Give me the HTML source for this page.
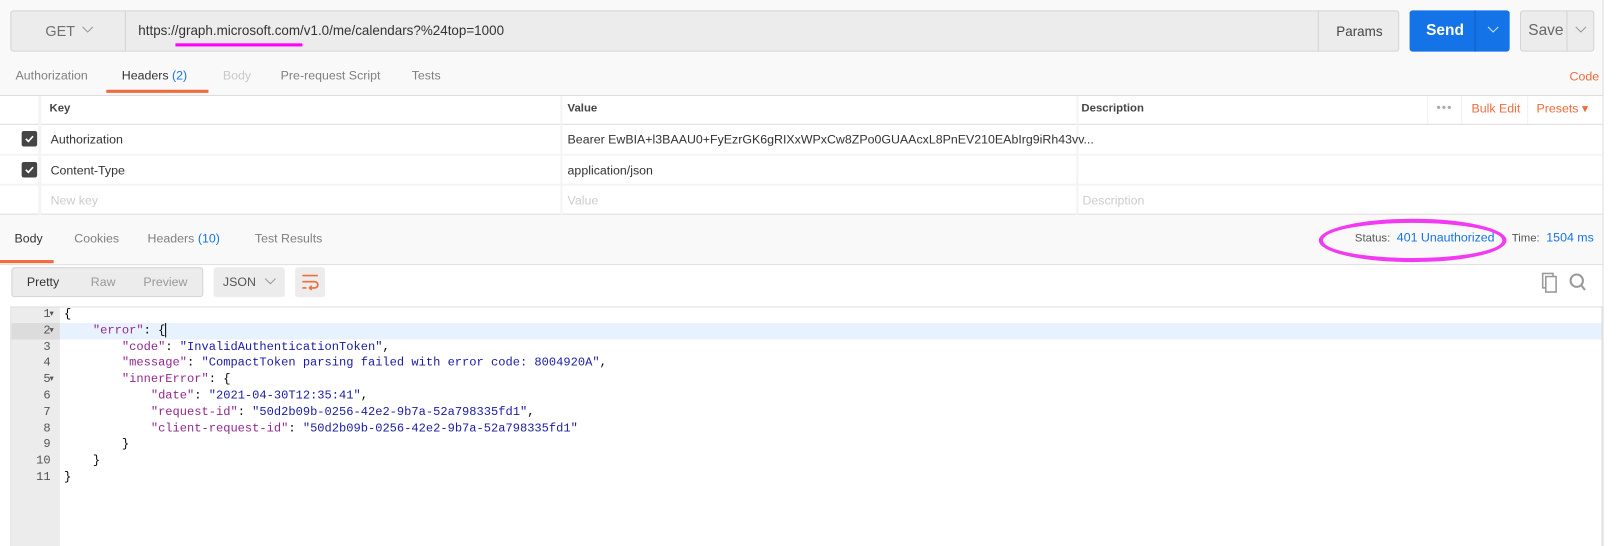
<!DOCTYPE html><html><head><style>
*{box-sizing:border-box;margin:0;padding:0}
html,body{width:1618px;height:546px;overflow:hidden;background:#f9f9f9}
#w{width:1568px;height:530px;transform:scale(1.0319);transform-origin:0 0;position:relative;font-family:"Liberation Sans",sans-serif;font-size:12px;color:#505050;background:#f9f9f9}
.a{position:absolute}
.mono{font-family:"Liberation Mono",monospace;font-size:11.7px}
.k{color:#92278f}.s{color:#1a1aa6}
</style></head><body><div id="w">
<div class="a" style="left:1553px;top:0;width:15px;height:530px;background:#fff;border-left:1px solid #ddd"></div>
<div class="a" style="left:10px;top:10px;width:1346px;height:40px;background:#ececec;border:1px solid #d4d4d4;border-radius:3px"></div>
<div class="a" style="left:121px;top:10px;width:1px;height:40px;background:#d4d4d4"></div>
<div class="a" style="left:44px;top:22px;font-size:14px;color:#707070">GET</div>
<svg class="a" style="left:78px;top:24px" width="14" height="10"><path d="M2 2l5 5 5-5" stroke="#999" fill="none"/></svg>
<div class="a" style="left:134px;top:22px;font-size:13px;color:#333">https://graph.microsoft.com/v1.0/me/calendars?%24top=1000</div>
<div class="a" style="left:170px;top:42px;width:123px;height:3px;background:#f0f"></div>
<div class="a" style="left:1277px;top:10px;width:1px;height:40px;background:#d4d4d4"></div>
<div class="a" style="left:1295px;top:23px;font-size:13px;color:#444">Params</div>
<div class="a" style="left:1366px;top:10px;width:97px;height:40px;background:#1473e6;border-radius:3px"></div>
<div class="a" style="left:1429px;top:10px;width:1px;height:40px;background:#0d5fc2"></div>
<div class="a" style="left:1382px;top:21px;font-size:15px;font-weight:bold;color:#fff">Send</div>
<svg class="a" style="left:1440px;top:24px" width="14" height="10"><path d="M2 2l5 5 5-5" stroke="#cfe0ff" fill="none"/></svg>
<div class="a" style="left:1473px;top:10px;width:72px;height:40px;background:#ececec;border:1px solid #d4d4d4;border-radius:3px"></div>
<div class="a" style="left:1518px;top:10px;width:1px;height:40px;background:#d4d4d4"></div>
<div class="a" style="left:1481px;top:21px;font-size:15px;color:#666">Save</div>
<svg class="a" style="left:1525px;top:24px" width="14" height="10"><path d="M2 2l5 5 5-5" stroke="#999" fill="none"/></svg>
<div class="a" style="left:15px;top:66px;color:#808080">Authorization</div>
<div class="a" style="left:118px;top:66px;color:#333">Headers <span style="color:#1473e6">(2)</span></div>
<div class="a" style="left:103px;top:87px;width:99px;height:3px;background:#f26b3a"></div>
<div class="a" style="left:216px;top:66px;color:#c8c8c8">Body</div>
<div class="a" style="left:272px;top:66px;color:#808080">Pre-request Script</div>
<div class="a" style="left:399px;top:66px;color:#808080">Tests</div>
<div class="a" style="left:1521px;top:67px;color:#f26b3a">Code</div>
<div class="a" style="left:0;top:92px;width:1553px;height:116px;background:#fff;border-top:1px solid #ddd;border-bottom:1px solid #ddd"></div>
<div class="a" style="left:0;top:120px;width:1553px;height:1px;background:#ddd"></div>
<div class="a" style="left:0;top:149px;width:1553px;height:2px;background:#f4f4f4"></div>
<div class="a" style="left:0;top:178px;width:1553px;height:2px;background:#f4f4f4"></div>
<div class="a" style="left:37px;top:93px;width:3px;height:115px;background:#f4f4f4"></div>
<div class="a" style="left:543px;top:93px;width:2px;height:115px;background:#f4f4f4"></div>
<div class="a" style="left:1043px;top:93px;width:2px;height:115px;background:#f4f4f4"></div>
<div class="a" style="left:1383px;top:93px;width:1px;height:27px;background:#f0f0f0"></div>
<div class="a" style="left:1416px;top:93px;width:1px;height:27px;background:#f0f0f0"></div>
<div class="a" style="left:1480px;top:93px;width:1px;height:27px;background:#f0f0f0"></div>
<div class="a" style="left:48px;top:99px;font-size:11px;font-weight:bold;color:#444">Key</div>
<div class="a" style="left:550px;top:99px;font-size:11px;font-weight:bold;color:#444">Value</div>
<div class="a" style="left:1048px;top:99px;font-size:11px;font-weight:bold;color:#444">Description</div>
<div class="a" style="left:1392px;top:97px;color:#aaa;letter-spacing:1px">•••</div>
<div class="a" style="left:1426px;top:98px;color:#f26b3a">Bulk Edit</div>
<div class="a" style="left:1489px;top:98px;color:#f26b3a">Presets ▾</div>
<div class="a" style="left:21px;top:127px;width:15px;height:15px;background:#444;border-radius:2px"></div>
<svg class="a" style="left:21px;top:127px" width="15" height="15"><path d="M4 7.5l2.5 2.5 4.5-5" stroke="#fff" stroke-width="1.6" fill="none"/></svg>
<div class="a" style="left:21px;top:157px;width:15px;height:15px;background:#444;border-radius:2px"></div>
<svg class="a" style="left:21px;top:157px" width="15" height="15"><path d="M4 7.5l2.5 2.5 4.5-5" stroke="#fff" stroke-width="1.6" fill="none"/></svg>
<div class="a" style="left:49px;top:128px;color:#333">Authorization</div>
<div class="a" style="left:550px;top:128px;color:#333">Bearer EwBIA+l3BAAU0+FyEzrGK6gRIXxWPxCw8ZPo0GUAAcxL8PnEV210EAbIrg9iRh43vv...</div>
<div class="a" style="left:49px;top:158px;color:#333">Content-Type</div>
<div class="a" style="left:550px;top:158px;color:#333">application/json</div>
<div class="a" style="left:49px;top:187px;color:#ccc">New key</div>
<div class="a" style="left:550px;top:187px;color:#ccc">Value</div>
<div class="a" style="left:1049px;top:187px;color:#ccc">Description</div>
<div class="a" style="left:14px;top:224px;color:#333">Body</div>
<div class="a" style="left:0;top:252px;width:52px;height:3px;background:#f26b3a"></div>
<div class="a" style="left:72px;top:224px;color:#808080">Cookies</div>
<div class="a" style="left:143px;top:224px;color:#808080">Headers <span style="color:#1473e6">(10)</span></div>
<div class="a" style="left:247px;top:224px;color:#808080">Test Results</div>
<div class="a" style="left:0;top:256px;width:1553px;height:1px;background:#ddd"></div>
<div class="a" style="left:1313px;top:223px;font-size:11px;color:#555">Status: <span style="color:#1473e6;font-size:12px">&nbsp;401 Unauthorized</span></div>
<div class="a" style="left:1465px;top:223px;font-size:11px;color:#555">Time: <span style="color:#1473e6;font-size:12px">&nbsp;1504 ms</span></div>
<div class="a" style="left:1278px;top:212px;width:182px;height:42px;border:4px solid #f33af3;border-radius:50%"></div>
<div class="a" style="left:0;top:257px;width:1553px;height:273px;background:#fff"></div>
<div class="a" style="left:11px;top:259px;width:186px;height:29px;background:#ececec;border:1px solid #d4d4d4;border-radius:3px"></div>
<div class="a" style="left:26px;top:266px;color:#333">Pretty</div>
<div class="a" style="left:88px;top:266px;color:#999">Raw</div>
<div class="a" style="left:139px;top:266px;color:#999">Preview</div>
<div class="a" style="left:207px;top:259px;width:69px;height:29px;background:#ececec;border-radius:3px"></div>
<div class="a" style="left:216px;top:266px;color:#555">JSON</div>
<svg class="a" style="left:255px;top:268px" width="14" height="10"><path d="M2 2l5 5 5-5" stroke="#999" fill="none"/></svg>
<div class="a" style="left:286px;top:259px;width:29px;height:29px;background:#ececec;border-radius:3px"></div>
<svg class="a" style="left:291px;top:264px" width="20" height="18"><path d="M2 3h15M2 9h12a3 3 0 010 6h-5M2 15h4M11 13l-2 2 2 2" stroke="#f26b3a" stroke-width="1.6" fill="none"/></svg>
<svg class="a" style="left:1493px;top:263px" width="44" height="22"><rect x="2" y="2" width="10" height="14" fill="none" stroke="#999" stroke-width="1.5"/><rect x="5" y="5" width="10" height="15" fill="#fff" stroke="#999" stroke-width="1.5"/><circle cx="35" cy="9" r="6" fill="none" stroke="#999" stroke-width="2"/><path d="M39 13l4 5" stroke="#999" stroke-width="2"/></svg>
<div class="a" style="left:10px;top:297px;width:1543px;height:235px;border:1px solid #ddd;border-bottom:none;background:#fff"></div>
<div class="a" style="left:11px;top:298px;width:47px;height:234px;background:#ececec"></div>
<div class="a" style="left:58px;top:313px;width:1494px;height:16px;background:#e8f2fe"></div>
<div class="a" style="left:11px;top:313px;width:47px;height:16px;background:#dcdcdc"></div>
<div class="a mono" style="left:11px;top:297px;width:38px;text-align:right;line-height:15.8px;color:#555">1<br>2<br>3<br>4<br>5<br>6<br>7<br>8<br>9<br>10<br>11</div>
<div class="a mono" style="left:48px;top:297px;line-height:15.8px;color:#555;font-size:8px"><div style="height:15.8px">▾</div><div style="height:15.8px">▾</div><div style="height:31.6px"></div><div>▾</div></div>
<pre class="a mono" style="left:62px;top:297px;line-height:15.8px;color:#000">{
    <span class="k">"error"</span>: {<span style="border-left:1px solid #000"></span>
        <span class="k">"code"</span>: <span class="s">"InvalidAuthenticationToken"</span>,
        <span class="k">"message"</span>: <span class="s">"CompactToken parsing failed with error code: 8004920A"</span>,
        <span class="k">"innerError"</span>: {
            <span class="k">"date"</span>: <span class="s">"2021-04-30T12:35:41"</span>,
            <span class="k">"request-id"</span>: <span class="s">"50d2b09b-0256-42e2-9b7a-52a798335fd1"</span>,
            <span class="k">"client-request-id"</span>: <span class="s">"50d2b09b-0256-42e2-9b7a-52a798335fd1"</span>
        }
    }
}</pre>
</div></body></html>
